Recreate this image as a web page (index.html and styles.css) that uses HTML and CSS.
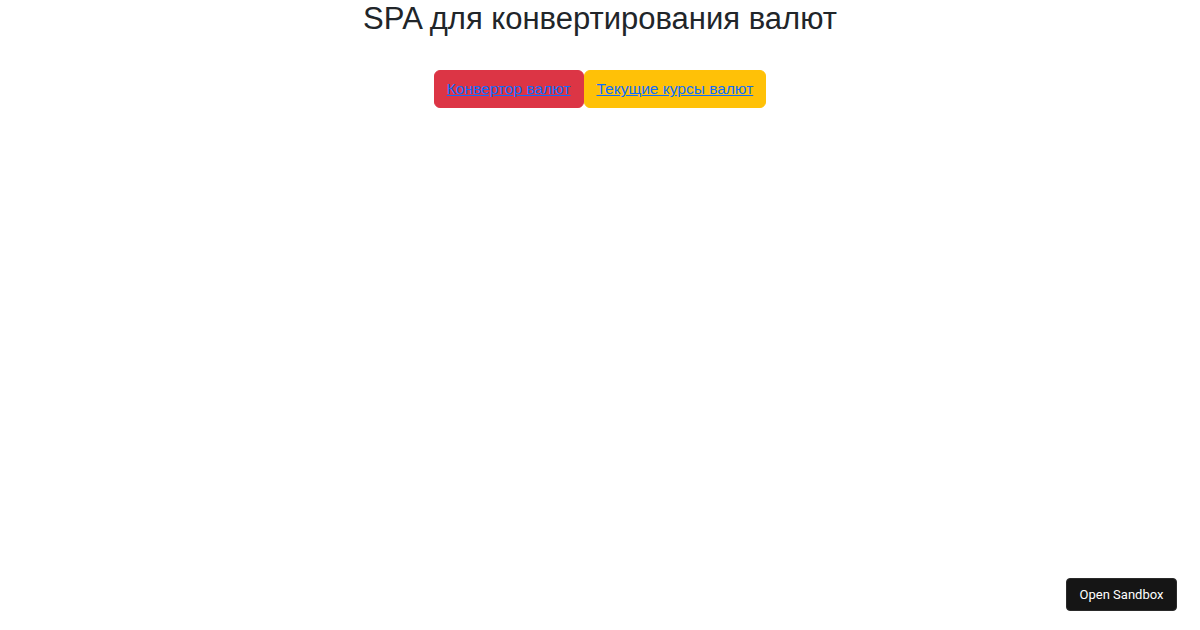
FILE: index.html
```html
<!DOCTYPE html>
<html lang="ru">
<head>
<meta charset="utf-8">
<title>SPA</title>
<link rel="stylesheet" href="styles.css">
</head>
<body>
<div class="app">
  <h1 class="title">SPA для конвертирования валют</h1>
  <nav class="nav">
    <a class="btn btn-danger" href="#">Конвертор валют</a>
    <a class="btn btn-warning" href="#">Текущие курсы валют</a>
  </nav>
</div>
<a class="sandbox" href="#">Open Sandbox</a>
</body>
</html>
```
FILE: styles.css
```css
html, body {
  margin: 0;
  padding: 0;
  background: #fff;
}
body {
  font-family: "Liberation Sans", Arial, sans-serif;
  font-size: 16px;
  line-height: 1.5;
  color: #212529;
}
.app {
  display: flex;
  flex-direction: column;
  align-items: center;
}
.title {
  margin: 0 0 33px 0;
  font-size: 31px;
  font-weight: 400;
  line-height: 1.2;
}
.nav {
  display: flex;
}
.btn {
  display: inline-block;
  padding: 6px 12px;
  border: 1px solid transparent;
  border-radius: 6px;
  font-size: 15.5px;
  line-height: 24px;
  color: #0d6efd;
  text-decoration: underline;
}
.btn-danger {
  background: #dc3545;
  border-color: #dc3545;
}
.btn-warning {
  background: #ffc107;
  border-color: #ffc107;
}
.sandbox {
  position: fixed;
  right: 23px;
  bottom: 19px;
  width: 111px;
  height: 33px;
  display: flex;
  align-items: center;
  justify-content: center;
  background: #151515;
  border-radius: 4px;
  color: #fff;
  font-family: Roboto, "Liberation Sans", sans-serif;
  font-size: 13px;
  text-decoration: none;
  border: 1px solid #2a2a2a;
  box-sizing: border-box;
}
```
